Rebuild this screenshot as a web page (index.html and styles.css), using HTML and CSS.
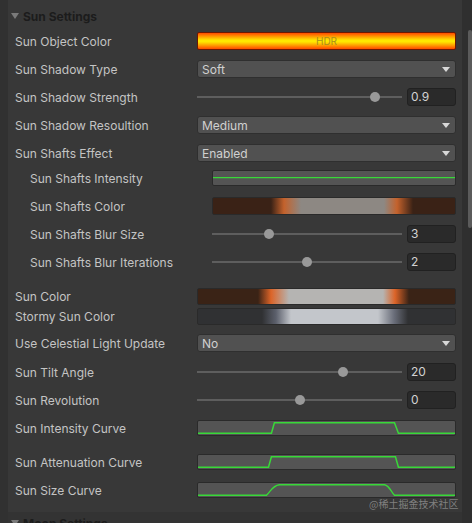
FILE: index.html
```html
<!DOCTYPE html>
<html lang="en">
<head>
  <meta charset="UTF-8" />
  <title>Sun Settings - Inspector</title>
  <link rel="stylesheet" href="styles.css">
</head>
<body>

  <div class="window">
    <div class="panel">

      <!-- Sun Settings -->
      <div class="section">
        <div class="foldout"><span class="fold-arrow"></span>Sun Settings</div>

        <div class="row">
          <div class="label">Sun Object Color</div>
          <div class="field hdr">HDR</div>
        </div>
        <div class="row">
          <div class="label">Sun Shadow Type</div>
          <div class="field dropdown">Soft</div>
        </div>
        <div class="row">
          <div class="label">Sun Shadow Strength</div>
          <div class="field slider">
            <div class="track"><span class="knob" style="left:86.8%"></span></div>
            <div class="num">0.9</div>
          </div>
        </div>
        <div class="row">
          <div class="label">Sun Shadow Resoultion</div>
          <div class="field dropdown">Medium</div>
        </div>
        <div class="row">
          <div class="label">Sun Shafts Effect</div>
          <div class="field dropdown">Enabled</div>
        </div>

        <div class="row indent row-short">
          <div class="label">Sun Shafts Intensity</div>
          <div class="field curve">
            <svg viewBox="0 0 244 16" preserveAspectRatio="none"><path d="M0 7.5 H244" /></svg>
          </div>
        </div>
        <div class="row indent">
          <div class="label">Sun Shafts Color</div>
          <div class="field grad shafts-grad"></div>
        </div>
        <div class="row indent">
          <div class="label">Sun Shafts Blur Size</div>
          <div class="field slider">
            <div class="track"><span class="knob" style="left:30%"></span></div>
            <div class="num">3</div>
          </div>
        </div>
        <div class="row indent">
          <div class="label">Sun Shafts Blur Iterations</div>
          <div class="field slider">
            <div class="track"><span class="knob" style="left:50%"></span></div>
            <div class="num">2</div>
          </div>
        </div>

        <div class="row row-thin gap-big">
          <div class="label">Sun Color</div>
          <div class="field grad sun-grad"></div>
        </div>
        <div class="row row-thin">
          <div class="label">Stormy Sun Color</div>
          <div class="field grad stormy-grad"></div>
        </div>

        <div class="row gap-small">
          <div class="label">Use Celestial Light Update</div>
          <div class="field dropdown">No</div>
        </div>
        <div class="row gap-tiny">
          <div class="label">Sun Tilt Angle</div>
          <div class="field slider">
            <div class="track"><span class="knob" style="left:71.2%"></span></div>
            <div class="num">20</div>
          </div>
        </div>
        <div class="row">
          <div class="label">Sun Revolution</div>
          <div class="field slider">
            <div class="track"><span class="knob" style="left:50.2%"></span></div>
            <div class="num">0</div>
          </div>
        </div>

        <div class="row">
          <div class="label">Sun Intensity Curve</div>
          <div class="field curve">
            <svg viewBox="0 0 259 16" preserveAspectRatio="none"><path d="M0 14 H74 L77 2 H198 L202 14 H259" /></svg>
          </div>
        </div>
        <div class="row gap-curve">
          <div class="label">Sun Attenuation Curve</div>
          <div class="field curve">
            <svg viewBox="0 0 259 16" preserveAspectRatio="none"><path d="M0 14 H71 L74 2 H199 L202 14 H259" /></svg>
          </div>
        </div>
        <div class="row">
          <div class="label">Sun Size Curve</div>
          <div class="field curve">
            <svg viewBox="0 0 259 16" preserveAspectRatio="none"><path d="M0 14 H69 C73 10 75 3 82 2 H188 C193 3 195 11 198 14 H259" /></svg>
          </div>
        </div>
      </div>

      <!-- Moon Settings (cut off) -->
      <div class="section next">
        <div class="foldout"><span class="fold-arrow"></span>Moon Settings</div>
      </div>

    </div>
    <div class="scrollbar"><div class="thumb"></div></div>
    <div class="watermark">@稀土掘金技术社区</div>
  </div>

</body>
</html>
```

FILE: styles.css
```css
body {
  margin: 0;
  background: #313131;
  font-family: Inter, "Noto Sans", sans-serif;
  font-size: 12px;
  color: #c4c4c4;
  overflow: hidden;
}
.window {
  position: relative;
  display: flex;
  height: 523px;
  padding-left: 8px;
  overflow: hidden;
}
.panel {
  width: 454px;
  background: #383838;
}
.section {
  padding: 0 6px 3px 7px;
}
.section.next {
  background: #333;
  height: 30px;
}

/* Foldout header */
.foldout {
  display: flex;
  align-items: center;
  height: 22px;
  margin: 5px 0 0 -4px;
  font-weight: bold;
  color: #1c1c1c;
}
.fold-arrow {
  width: 0;
  height: 0;
  border-left: 4px solid transparent;
  border-right: 4px solid transparent;
  border-top: 6px solid #7a7a7a;
  margin-right: 4px;
}

/* Property rows */
.row {
  display: flex;
  align-items: center;
  height: 28px;
}
.row.indent {
  padding-left: 15px;
}
.row-short {
  height: 22px;
  margin-bottom: 3px;
}
.row-thin {
  height: 20px;
}
.gap-big { margin-top: 10px; }
.gap-small { margin-top: 3px; }
.gap-tiny { margin-top: 1px; }
.gap-curve { margin-top: 6px; }
.label {
  width: 182px;
  flex: none;
  white-space: nowrap;
}
.field {
  flex: 1;
  box-sizing: border-box;
}

/* HDR color */
.hdr {
  height: 18px;
  border: 1px solid #6e1800;
  border-radius: 2px;
  background: linear-gradient(to bottom, #ff4a00 0%, #ff9a00 22%, #ffd800 40%, #fff000 50%, #ffd800 60%, #ff9a00 78%, #ff4a00 100%);
  color: #a8901c;
  font-size: 10px;
  text-align: center;
  line-height: 16px;
}

/* Dropdown */
.dropdown {
  display: flex;
  align-items: center;
  justify-content: space-between;
  height: 18px;
  padding: 0 5px 0 4px;
  background: #515151;
  border: 1px solid #2f2f2f;
  border-radius: 3px;
  color: #d0d0d0;
}
.dropdown::after {
  content: "";
  border-left: 4px solid transparent;
  border-right: 4px solid transparent;
  border-top: 5px solid #d8d8d8;
}

/* Slider + number */
.slider {
  display: flex;
  align-items: center;
  gap: 5px;
}
.track {
  position: relative;
  flex: 1;
  height: 2px;
  background: #5e5e5e;
}
.knob {
  position: absolute;
  top: -4px;
  width: 10px;
  height: 10px;
  margin-left: -5px;
  border-radius: 50%;
  background: #999;
}
.num {
  width: 49px;
  height: 18px;
  box-sizing: border-box;
  padding-left: 3px;
  background: #2a2a2a;
  border: 1px solid #212121;
  border-radius: 3px;
  color: #d2d2d2;
  line-height: 16px;
}

/* Curves */
.curve {
  height: 16px;
  background: #545454;
  border: 1px solid #2a2a2a;
  border-radius: 2px;
  overflow: hidden;
}
.curve svg {
  display: block;
  width: 100%;
  height: 100%;
}
.curve path {
  fill: none;
  stroke: #38d838;
  stroke-width: 1.5;
}

/* Gradients */
.grad {
  border: 1px solid #2a2a2a;
  border-radius: 2px;
}
.shafts-grad {
  height: 18px;
  background: linear-gradient(to right, #3a2216 0px, #3a2216 58px, #c4622c 71px, #8d8883 88px, #8d8883 171px, #c4622c 184px, #3a2216 200px, #3a2216 100%);
}
.sun-grad {
  height: 17px;
  background: linear-gradient(to right, #3a2316 0px, #3a2316 60px, #dc6428 73px, #b5b4b2 91px, #b5b4b2 185px, #dc6428 197px, #3a2316 211px, #3a2316 100%);
}
.stormy-grad {
  height: 17px;
  background: linear-gradient(to right, #303133 0px, #303133 64px, #5c606c 78px, #c3c6cb 93px, #c3c6cb 180px, #6a6e7a 196px, #303133 210px, #303133 100%);
}

/* Scrollbar */
.scrollbar {
  width: 10px;
  background: #2f2f2f;
}
.thumb {
  width: 4px;
  height: 198px;
  margin: 30px 0 0 6px;
  border-radius: 2px;
  background: #5b5b5b;
}

.watermark {
  position: absolute;
  left: 369px;
  top: 496px;
  font-family: "Noto Sans CJK SC", sans-serif;
  font-size: 10px;
  color: rgba(190, 190, 190, 0.55);
}
```
